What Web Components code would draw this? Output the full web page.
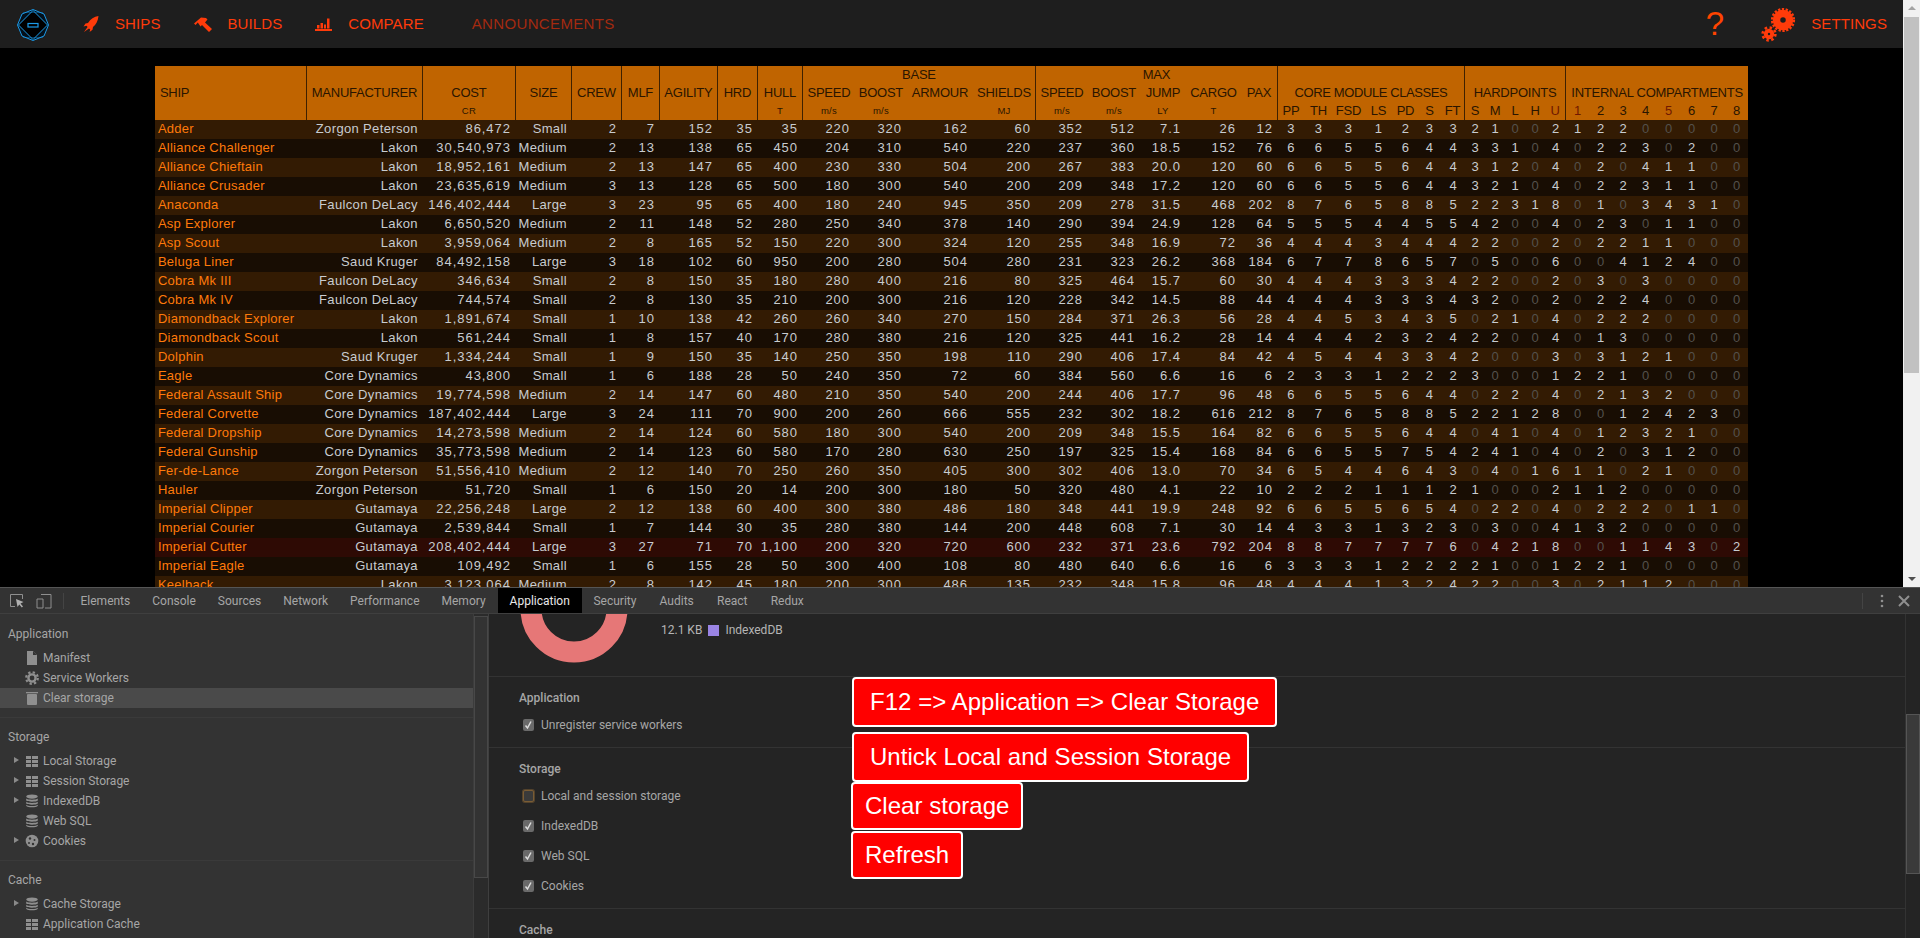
<!DOCTYPE html>
<html>
<head>
<meta charset="utf-8">
<title>Coriolis</title>
<style>
  html, body { margin: 0; height: 100%; background: #000; overflow: hidden; }
  body { display: flex; flex-direction: column; height: 938px; font-family: "Liberation Sans", Arial, sans-serif; }
</style>
</head>
<body>
<upper-view>
  <top-nav></top-nav>
  <ship-table></ship-table>
</upper-view>
<dev-tools>
  <note-box>F12 =&gt; Application =&gt; Clear Storage</note-box>
  <note-box>Untick Local and Session Storage</note-box>
  <note-box small>Clear storage</note-box>
  <note-box small>Refresh</note-box>
</dev-tools>

<script>
class UpperView extends HTMLElement {
    connectedCallback() {
        this.attachShadow({ mode: 'open' });
        this.shadowRoot.innerHTML = `
            <style>
                :host { display: flex; height: 587px; flex: none; background: #000; overflow: hidden; }
                .page { flex: 1; min-width: 0; display: flex; flex-direction: column; }
                .bar { width: 17px; flex: none; background: #f1f1f1; display: flex; flex-direction: column; align-items: center; }
                .up, .down { width: 0; height: 0; border-left: 4px solid transparent; border-right: 4px solid transparent; flex: none; }
                .up { border-bottom: 4px solid #a3a3a3; margin: 6px 0 7px; }
                .down { border-top: 4px solid #505050; margin: 7px 0 6px; }
                .thumb { width: 15px; height: 356px; background: #c1c1c1; flex: none; }
                .gap { flex: 1; }
            </style>
            <div class="page"><slot></slot></div>
            <div class="bar"><div class="up"></div><div class="thumb"></div><div class="gap"></div><div class="down"></div></div>
        `;
    }
}

class TopNav extends HTMLElement {
    connectedCallback() {
        this.attachShadow({ mode: 'open' });
        this.shadowRoot.innerHTML = `
            <style>
                :host { display: flex; align-items: center; height: 48px; flex: none; background: #1e1e1e; color: #ff3b0a;
                        font: 15px "Liberation Sans", Arial, sans-serif; letter-spacing: .1px; }
                svg { display: block; flex: none; fill: currentColor; }
                .logo { margin: 1px 33px 0 17px; }
                .item { display: flex; align-items: center; gap: 16px; margin-right: 33px; }
                .item span { position: relative; top: -1px; }
                .dim { color: #a42a10; margin-left: 15px; letter-spacing: .35px; position: relative; top: -1px; }
                .push { flex: 1; }
                .help { font-size: 33px; color: #ff4400; margin-right: 36px; line-height: 48px; }
                .settings { margin-right: 16px; gap: 13px; }
            </style>
            <svg class="logo" width="32" height="32" viewBox="0 0 32 32">
                <path d="M16 .5 27 5 31.500 16 27 27 16 31.500 5 27 .5 16 5 5Z" fill="#04101a" stroke="#1c9ae8"/>
                <path d="M16 1.500 30.500 16 16 30.500 1.500 16Z" fill="#000" stroke="#1c9ae8"/>
                <path d="M6 3.500 26 3.500M6 28.500 26 28.500" fill="none" stroke="#1c9ae8" stroke-width=".6" opacity=".6"/>
                <rect x="11" y="14.500" width="10" height="3.500" fill="none" stroke="#1c9ae8" stroke-width="1.200"/>
            </svg>
            <div class="item">
                <svg width="17" height="16" viewBox="0 0 17 16"><path d="M16.500 0C12 .5 8.500 3 6 7L3.500 7.500 1.500 10.500 4.500 9.800 5.600 10.900 2 16 7 12.400 8.200 13.600 7.600 16 10.500 13.800 11 11C14 8.500 16 5 16.500 0Z"/></svg>
                <span>SHIPS</span>
            </div>
            <div class="item">
                <svg width="18" height="15" viewBox="0 0 18 15"><path d="M0 6.500 7 .5 12 1 13.500 2.500 11 5.500 18 12 15 15 8 8 6.500 9.500 3.800 5.500 1.600 8Z"/></svg>
                <span>BUILDS</span>
            </div>
            <div class="item">
                <svg width="17" height="13" viewBox="0 0 17 13"><path d="M2 7h2.500v3.500H2zM5.500 5H8v5.500H5.500zM9 6.500h2v4H9zM12 .5h2.500v10H12zM0 11h17v2H0z"/></svg>
                <span>COMPARE</span>
            </div>
            <div class="dim">ANNOUNCEMENTS</div>
            <div class="push"></div>
            <div class="help">?</div>
            <div class="item settings">
                <svg width="38" height="36" viewBox="0 0 38 36">
                    <circle cx="23" cy="14" r="6.500" fill="none" stroke="currentColor" stroke-width="7.500"/>
                    <circle cx="23" cy="14" r="10.800" fill="none" stroke="currentColor" stroke-width="2.600" stroke-dasharray="2.300 1.500"/>
                    <circle cx="9" cy="28" r="3.200" fill="none" stroke="currentColor" stroke-width="4"/>
                    <circle cx="9" cy="28" r="6.400" fill="none" stroke="currentColor" stroke-width="2.600" stroke-dasharray="2.500 2.500"/>
                </svg>
                <span>SETTINGS</span>
            </div>
        `;
    }
}

const COL_EDGES = [155,307,423,516,572,622,660,718,758,803,855,907,973,1036,1088,1140,1186,1241,1278,
    1304,1333,1364,1393,1418,1441,1465,1485,1505,1525,1545,1566,1589,1612,1634,1657,1680,1703,1725,1748];

const SHIPS = [
    'Adder|Zorgon Peterson|86,472|Small|2|7|152|35|35|220|320|162|60|352|512|7.1|26|12|3331233|21002|12200000',
    'Alliance Challenger|Lakon|30,540,973|Medium|2|13|138|65|450|204|310|540|220|237|360|18.5|152|76|6655644|33104|02230200',
    'Alliance Chieftain|Lakon|18,952,161|Medium|2|13|147|65|400|230|330|504|200|267|383|20.0|120|60|6655644|31204|02041100',
    'Alliance Crusader|Lakon|23,635,619|Medium|3|13|128|65|500|180|300|540|200|209|348|17.2|120|60|6655644|32104|02231100',
    'Anaconda|Faulcon DeLacy|146,402,444|Large|3|23|95|65|400|180|240|945|350|209|278|31.5|468|202|8765885|22318|01034310',
    'Asp Explorer|Lakon|6,650,520|Medium|2|11|148|52|280|250|340|378|140|290|394|24.9|128|64|5554455|42004|02301100',
    'Asp Scout|Lakon|3,959,064|Medium|2|8|165|52|150|220|300|324|120|255|348|16.9|72|36|4443444|22002|02211000',
    'Beluga Liner|Saud Kruger|84,492,158|Large|3|18|102|60|950|200|280|504|280|231|323|26.2|368|184|6778657|05006|00412400',
    'Cobra Mk III|Faulcon DeLacy|346,634|Small|2|8|150|35|180|280|400|216|80|325|464|15.7|60|30|4443334|22002|03030000',
    'Cobra Mk IV|Faulcon DeLacy|744,574|Small|2|8|130|35|210|200|300|216|120|228|342|14.5|88|44|4443334|32002|02240000',
    'Diamondback Explorer|Lakon|1,891,674|Small|1|10|138|42|260|260|340|270|150|284|371|26.3|56|28|4453435|02104|02220000',
    'Diamondback Scout|Lakon|561,244|Small|1|8|157|40|170|280|380|216|120|325|441|16.2|28|14|4442324|22004|01300000',
    'Dolphin|Saud Kruger|1,334,244|Small|1|9|150|35|140|250|350|198|110|290|406|17.4|84|42|4544334|20003|03121000',
    'Eagle|Core Dynamics|43,800|Small|1|6|188|28|50|240|350|72|60|384|560|6.6|16|6|2331222|30001|22100000',
    'Federal Assault Ship|Core Dynamics|19,774,598|Medium|2|14|147|60|480|210|350|540|200|244|406|17.7|96|48|6655644|02204|02132000',
    'Federal Corvette|Core Dynamics|187,402,444|Large|3|24|111|70|900|200|260|666|555|232|302|18.2|616|212|8765885|22128|00124230',
    'Federal Dropship|Core Dynamics|14,273,598|Medium|2|14|124|60|580|180|300|540|200|209|348|15.5|164|82|6655644|04104|01232100',
    'Federal Gunship|Core Dynamics|35,773,598|Medium|2|14|123|60|580|170|280|630|250|197|325|15.4|168|84|6655754|24104|02031200',
    'Fer-de-Lance|Zorgon Peterson|51,556,410|Medium|2|12|140|70|250|260|350|405|300|302|406|13.0|70|34|6544643|04016|11021000',
    'Hauler|Zorgon Peterson|51,720|Small|1|6|150|20|14|200|300|180|50|320|480|4.1|22|10|2221112|10002|11200000',
    'Imperial Clipper|Gutamaya|22,256,248|Large|2|12|138|60|400|300|380|486|180|348|441|19.9|248|92|6655654|02204|02220110',
    'Imperial Courier|Gutamaya|2,539,844|Small|1|7|144|30|35|280|380|144|200|448|608|7.1|30|14|4331323|03004|13200000',
    'Imperial Cutter|Gutamaya|208,402,444|Large|3|27|71|70|1,100|200|320|720|600|232|371|23.6|792|204|8877776|04218|00114302',
    'Imperial Eagle|Gutamaya|109,492|Small|1|6|155|28|50|300|400|108|80|480|640|6.6|16|6|3331222|21001|22100000',
    'Keelback|Lakon|3,123,064|Medium|2|8|142|45|180|200|300|486|135|232|348|15.8|96|48|4441324|22003|02112000'
];

class ShipTable extends HTMLElement {
    connectedCallback() {
        this.attachShadow({ mode: 'open' });
        const cols = COL_EDGES.slice(1).map((e, i) => `<col style="width:${e - COL_EDGES[i]}px">`).join('');
        const plain = ['SHIP', 'MANUFACTURER', 'COST', 'SIZE', 'CREW', 'MLF', 'AGILITY', 'HRD', 'HULL'];
        const plainUnits = ['', '', 'CR', '', '', '', '', '', 'T'];
        const core = ['PP', 'TH', 'FSD', 'LS', 'PD', 'S', 'FT'];
        const points = ['S', 'M', 'L', 'H', '<i>U</i>'];
        const slots = ['<i>1</i>', '2', '3', '4', '<i>5</i>', '6', '7', '8'];
        const sub = list => list.map((t, i) => `<th class="u${i === list.length - 1 ? ' b' : ''}">${t}</th>`).join('');

        const head = `
            <tr>${plain.map(() => '<th class="b"></th>').join('')}
                <th class="b" colspan="4">BASE</th><th class="b" colspan="5">MAX</th>
                <th class="b" colspan="7"></th><th class="b" colspan="5"></th><th colspan="8"></th></tr>
            <tr>${plain.map((t, i) => `<th class="b${i === 0 ? ' l' : ''}">${t}</th>`).join('')}
                <th>SPEED</th><th>BOOST</th><th>ARMOUR</th><th class="b">SHIELDS</th>
                <th>SPEED</th><th>BOOST</th><th>JUMP</th><th>CARGO</th><th class="b">PAX</th>
                <th class="b tight" colspan="7">CORE MODULE CLASSES</th><th class="b" colspan="5">HARDPOINTS</th><th colspan="8">INTERNAL COMPARTMENTS</th></tr>
            <tr>${plainUnits.map(t => `<th class="u small b">${t}</th>`).join('')}
                <th class="u small">m/s</th><th class="u small">m/s</th><th class="u small"></th><th class="u small b">MJ</th>
                <th class="u small">m/s</th><th class="u small">m/s</th><th class="u small">LY</th><th class="u small">T</th><th class="u small b"></th>
                ${sub(core)}${sub(points)}${sub(slots).replace(/ b"/g, '"')}</tr>`;

        const digit = d => `<td class="c${d === '0' ? ' z' : ''}">${d}</td>`;
        const body = SHIPS.map(line => {
            const p = line.split('|');
            const cells = p.slice(1, 18).map((v, i) => `<td${i === 0 || i === 2 ? ' class="t"' : ''}>${v}</td>`).join('');
            const digits = (p[18] + p[19] + p[20]).split('').map(digit).join('');
            return `<tr${p[0] === 'Imperial Cutter' ? ' class="hot"' : ''}><td class="name">${p[0]}</td>${cells}${digits}</tr>`;
        }).join('');

        this.shadowRoot.innerHTML = `
            <style>
                :host { display: flex; justify-content: center; flex: 1; min-height: 0; padding-top: 18px; overflow: hidden; background: #000; }
                table { table-layout: fixed; width: 1593px; border-collapse: separate; border-spacing: 0; height: max-content;
                        font: 13px "Liberation Sans", Arial, sans-serif; color: #c8ccd0; }
                thead { background: #c06400; }
                th { height: 18px; padding: 0; font-weight: 400; font-size: 13px; line-height: 18px; letter-spacing: -.25px;
                     color: #2a1500; text-align: center; white-space: nowrap; overflow: visible; }
                th.b { border-right: 1px solid #3f2100; }
                th.l { text-align: left; padding-left: 5px; }
                th.tight { letter-spacing: -.4px; }
                th.small { font-size: 9.5px; letter-spacing: .2px; }
                th i { font-style: normal; color: #701800; }
                td { height: 18px; line-height: 18px; padding: 0 5px 1px 0; text-align: right; white-space: nowrap; overflow: hidden; letter-spacing: .95px; }
                td.t { letter-spacing: .35px; }
                td.name { text-align: left; padding: 0 0 1px 3px; color: #ff7a0a; letter-spacing: .25px; }
                td.c { text-align: center; padding: 0 0 1px; letter-spacing: 0; }
                td.z { color: #54514c; }
                tbody tr:nth-child(odd) { background: #331b03; }
                tbody tr:nth-child(even) { background: #180d03; }
                tbody tr.hot { background: #2e0a04; }
            </style>
            <table>
                <colgroup>${cols}</colgroup>
                <thead>${head}</thead>
                <tbody>${body}</tbody>
            </table>
        `;
    }
}

const DT_ICONS = {
    file: '<path d="M2 0h6l4 4v10H2z" fill="#8f8f8f"/><path d="M8 0v4h4z" fill="#333"/>',
    gear: '<circle cx="7" cy="7" r="3.600" fill="none" stroke="#8f8f8f" stroke-width="2.400"/><circle cx="7" cy="7" r="5.800" fill="none" stroke="#8f8f8f" stroke-width="2.200" stroke-dasharray="2.300 2.250"/>',
    trash: '<rect x="2" y="3" width="10" height="11" rx="1" fill="#8f8f8f"/><rect x="1" y="1" width="12" height="1.300" fill="#8f8f8f"/>',
    grid: '<path d="M1 2h5v3H1zM7 2h6v3H7zM1 6h5v3H1zM7 6h6v3H7zM1 10h5v3H1zM7 10h6v3H7z" fill="#8f8f8f"/>',
    db: '<ellipse cx="7" cy="2.600" rx="5.800" ry="2.100" fill="#8f8f8f"/><path d="M1.200 4.600c1.200 1.600 10.400 1.600 11.600 0v1.900c-1.200 1.600-10.400 1.600-11.600 0zM1.200 7.700c1.200 1.600 10.400 1.600 11.600 0v1.900c-1.200 1.600-10.400 1.600-11.600 0zM1.200 10.800c1.200 1.600 10.400 1.600 11.600 0v1c-1.200 2-10.400 2-11.600 0z" fill="#8f8f8f"/>',
    cookie: '<circle cx="7" cy="7" r="6.300" fill="#8f8f8f"/><circle cx="5" cy="4.500" r="1.200" fill="#333"/><circle cx="9.500" cy="6" r="1" fill="#333"/><circle cx="4" cy="9" r="1" fill="#333"/><circle cx="8" cy="10" r="1.200" fill="#333"/>'
};

class TreeItem extends HTMLElement {
    connectedCallback() {
        this.attachShadow({ mode: 'open' });
        const arrow = this.hasAttribute('arrow') ? '<b></b>' : '';
        this.shadowRoot.innerHTML = `
            <style>
                :host { display: flex; align-items: center; height: 20px; position: relative; padding-left: 43px;
                        font: 12px "Roboto", "Liberation Sans", sans-serif; color: #a6a6a6; }
                :host([selected]) { background: #4a4a4a; }
                svg { position: absolute; left: 25px; top: 3px; }
                b { position: absolute; left: 14px; top: 6px; width: 0; height: 0;
                    border-left: 5px solid #8a8a8a; border-top: 3.500px solid transparent; border-bottom: 3.500px solid transparent; }
            </style>
            ${arrow}<svg width="14" height="14" viewBox="0 0 14 14">${DT_ICONS[this.getAttribute('icon')]}</svg><slot></slot>
        `;
    }
}

class TreeSection extends HTMLElement {
    connectedCallback() {
        this.attachShadow({ mode: 'open' });
        this.shadowRoot.innerHTML = `
            <style>
                :host { display: block; padding: 9px 0; border-bottom: 1px solid #3a3a3a; }
                :host(:first-child) { padding-top: 10px; }
                :host(:last-child) { border-bottom: 0; }
                h3 { margin: 0 0 4px 8px; height: 20px; font: 12px/20px "Roboto", "Liberation Sans", sans-serif; color: #a6a6a6; }
            </style>
            <h3>${this.getAttribute('title')}</h3>
            <slot></slot>
        `;
    }
}

class CheckRow extends HTMLElement {
    connectedCallback() {
        this.attachShadow({ mode: 'open' });
        const off = this.hasAttribute('off');
        this.shadowRoot.innerHTML = `
            <style>
                :host { display: flex; align-items: center; height: 30px; padding-left: 34px; gap: 7px;
                        font: 12px "Roboto", "Liberation Sans", sans-serif; color: #a6a6a6; }
                span { width: 11px; height: 12px; border-radius: 2px; background: #6a6a6a; display: flex; box-sizing: border-box; }
                span.off { background: #3a3a3a; border: 1px solid #7a5c34; box-shadow: 0 0 0 1px #54432c; }
                svg { display: block; }
            </style>
            <span class="${off ? 'off' : ''}">${off ? '' : '<svg width="11" height="12" viewBox="0 0 11 12"><path d="M2.500 6.500 4.500 9 8 2.500" fill="none" stroke="#dcdcdc" stroke-width="1.500"/></svg>'}</span>
            <slot></slot>
        `;
    }
}

class PanelSection extends HTMLElement {
    connectedCallback() {
        this.attachShadow({ mode: 'open' });
        this.shadowRoot.innerHTML = `
            <style>
                :host { display: block; padding: 11px 0 7px 30px; border-bottom: 1px solid #333; }
                :host(:last-child) { border-bottom: 0; }
                h3 { margin: 0 0 2px; height: 20px; font: 500 12px/20px "Roboto", "Liberation Sans", sans-serif; color: #a6a6a6; }
                ::slotted(check-row) { margin-left: -30px; }
            </style>
            <h3>${this.getAttribute('title')}</h3>
            <slot></slot>
        `;
    }
}

class UsageChart extends HTMLElement {
    connectedCallback() {
        this.attachShadow({ mode: 'open' });
        this.shadowRoot.innerHTML = `
            <style>
                :host { display: flex; align-items: flex-start; height: 62px; overflow: hidden; padding-left: 31px;
                        border-bottom: 1px solid #333; font: 12px "Roboto", "Liberation Sans", sans-serif; color: #b5b5b5; }
                svg { flex: none; margin-top: -59px; }
                .legend { display: flex; align-items: center; margin: 9px 0 0 33px; gap: 6px; }
                i { width: 11px; height: 11px; background: #9a84e4; }
            </style>
            <svg width="108" height="108" viewBox="0 0 108 108"><circle cx="54" cy="54" r="43" fill="none" stroke="#e67777" stroke-width="21"/></svg>
            <div class="legend"><span>12.1 KB</span><i></i><span>IndexedDB</span></div>
        `;
    }
}

class NoteBox extends HTMLElement {
    connectedCallback() {
        this.attachShadow({ mode: 'open' });
        this.shadowRoot.innerHTML = `
            <style>
                :host { display: block; width: max-content; box-sizing: border-box; height: 50px; line-height: 46px; padding: 0 16px; background: #f00; color: #fff;
                        border: 2px solid #fff; border-radius: 4px; font-size: 24px; font-family: "Liberation Sans", Arial, sans-serif; letter-spacing: .03px; }
                :host([small]) { height: 48px; line-height: 44px; padding: 0 12px; margin-left: -1px; }
            </style>
            <slot></slot>
        `;
    }
}

class DevTools extends HTMLElement {
    connectedCallback() {
        this.attachShadow({ mode: 'open' });
        const tabs = ['Elements', 'Console', 'Sources', 'Network', 'Performance', 'Memory', 'Application', 'Security', 'Audits', 'React', 'Redux'];
        this.shadowRoot.innerHTML = `
            <style>
                :host { display: flex; flex-direction: column; flex: 1; min-height: 0; position: relative; overflow: hidden;
                        border-top: 1px solid #555; background: #242424; font: 12px "Roboto", "Liberation Sans", sans-serif; color: #a6a6a6; }
                .bar { display: flex; align-items: stretch; height: 25px; flex: none; background: #333; border-bottom: 1px solid #3f3f3f; }
                .tool { display: flex; align-items: center; flex: none; }
                .sep { width: 1px; height: 16px; background: #444; align-self: center; }
                .tab { display: flex; align-items: center; padding: 0 11px; }
                .tab.on { background: #000; color: #e8e8e8; padding: 0 12px; margin-left: 1px; }
                .tab.on ~ .tab { padding: 0 11.600px; }
                .grow { flex: 1; }
                .body { display: flex; flex: 1; min-height: 0; }
                .side { display: flex; width: 489px; flex: none; background: #333; box-sizing: border-box; border-right: 1px solid #3f3f3f; }
                .tree { flex: 1; min-width: 0; }
                .sbar { width: 14px; flex: none; background: #2b2b2b; border-left: 1px solid #3c3c3c; padding-top: 2px; }
                .sbar div { background: #333; border: 1px solid #484848; box-sizing: border-box; }
                .main { flex: 1; min-width: 0; overflow: hidden; }
                .right { width: 14px; flex: none; background: #242424; border-left: 1px solid #333; padding-top: 100px; }
                .right div { height: 160px; background: #3a3a3a; border: 1px solid #555; box-sizing: border-box; }
                .notes { position: absolute; left: 852px; top: 89px; display: flex; flex-direction: column; }
                ::slotted(note-box:nth-child(2)) { margin-top: 5px; }
                ::slotted(note-box:nth-child(4)) { margin-top: 1px; }
            </style>
            <div class="bar">
                <div class="tool" style="margin-left:10px">
                    <svg width="14" height="14" viewBox="0 0 14 14"><path d="M5 12.500H.5V.5h12V5" fill="none" stroke="#8f8f8f"/><path d="M6 5 13.500 8 10.500 9.500 13 12.500 11.800 13.500 9.300 10.500 7.500 13Z" fill="#b0b0b0"/></svg>
                </div>
                <div class="tool" style="margin:0 11px 0 12px">
                    <svg width="16" height="16" viewBox="0 0 16 16"><path d="M5 1.500h10v13.500H9M1 6h6v9H1z" fill="none" stroke="#8f8f8f"/></svg>
                </div>
                <div class="sep"></div>
                <div style="width:5.500px"></div>
                ${tabs.map(t => `<div class="tab${t === 'Application' ? ' on' : ''}">${t}</div>`).join('')}
                <div class="grow"></div>
                <div class="sep"></div>
                <div class="tool" style="margin:0 14px 0 17px">
                    <svg width="4" height="14" viewBox="0 0 4 14"><circle cx="2" cy="2" r="1.300" fill="#8f8f8f"/><circle cx="2" cy="7" r="1.300" fill="#8f8f8f"/><circle cx="2" cy="12" r="1.300" fill="#8f8f8f"/></svg>
                </div>
                <div class="tool" style="margin-right:10px">
                    <svg width="12" height="12" viewBox="0 0 12 12"><path d="M1 1 11 11M11 1 1 11" stroke="#8f8f8f" stroke-width="2"/></svg>
                </div>
            </div>
            <div class="body">
                <div class="side">
                    <div class="tree">
                        <tree-section title="Application">
                            <tree-item icon="file">Manifest</tree-item>
                            <tree-item icon="gear">Service Workers</tree-item>
                            <tree-item icon="trash" selected>Clear storage</tree-item>
                        </tree-section>
                        <tree-section title="Storage">
                            <tree-item icon="grid" arrow>Local Storage</tree-item>
                            <tree-item icon="grid" arrow>Session Storage</tree-item>
                            <tree-item icon="db" arrow>IndexedDB</tree-item>
                            <tree-item icon="db">Web SQL</tree-item>
                            <tree-item icon="cookie" arrow>Cookies</tree-item>
                        </tree-section>
                        <tree-section title="Cache">
                            <tree-item icon="db" arrow>Cache Storage</tree-item>
                            <tree-item icon="grid">Application Cache</tree-item>
                        </tree-section>
                    </div>
                    <div class="sbar"><div style="height:262px"></div></div>
                </div>
                <div class="main">
                    <usage-chart></usage-chart>
                    <panel-section title="Application">
                        <check-row>Unregister service workers</check-row>
                    </panel-section>
                    <panel-section title="Storage">
                        <check-row off>Local and session storage</check-row>
                        <check-row>IndexedDB</check-row>
                        <check-row>Web SQL</check-row>
                        <check-row>Cookies</check-row>
                    </panel-section>
                    <panel-section title="Cache"></panel-section>
                </div>
                <div class="right"><div></div></div>
            </div>
            <div class="notes"><slot></slot></div>
        `;
    }
}

customElements.define('upper-view', UpperView);
customElements.define('top-nav', TopNav);
customElements.define('ship-table', ShipTable);
customElements.define('tree-item', TreeItem);
customElements.define('tree-section', TreeSection);
customElements.define('check-row', CheckRow);
customElements.define('panel-section', PanelSection);
customElements.define('usage-chart', UsageChart);
customElements.define('note-box', NoteBox);
customElements.define('dev-tools', DevTools);
</script>
</body>
</html>
